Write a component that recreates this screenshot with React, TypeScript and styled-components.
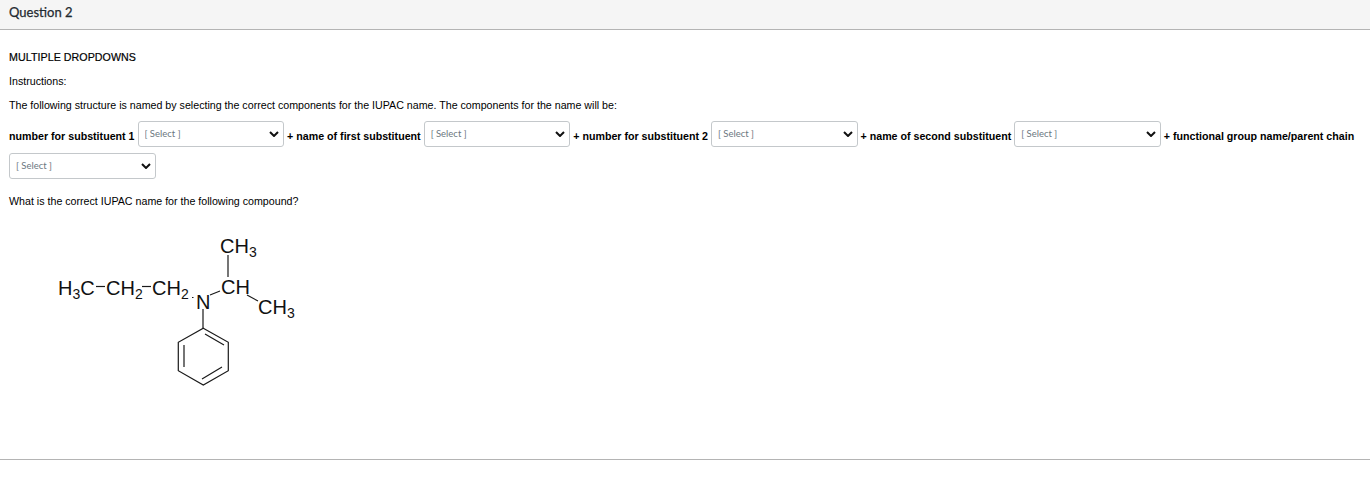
import React from 'react';
import styled, { createGlobalStyle } from 'styled-components';

const GlobalStyle = createGlobalStyle`
  html, body {
    margin: 0;
    padding: 0;
    background: #fff;
  }
`;

const Page = styled.div`
  width: 1370px;
  height: 479px;
  overflow: hidden;
  font-family: "Liberation Sans", Arial, sans-serif;
  font-size: 10.67px;
  color: #000;
`;

const Header = styled.header`
  height: 30px;
  box-sizing: border-box;
  padding: 3px 9px 0;
  background: #f5f5f5;
  border-bottom: 1px solid #b4b4b4;
  font-family: Lato, sans-serif;
  font-size: 13px;
  line-height: 18px;
  color: #1f2a30;
  -webkit-text-stroke: 0.25px #1f2a30;
`;

const Body = styled.section`
  height: 430px;
  box-sizing: border-box;
  padding: 21px 9px 0;
  border-bottom: 1px solid #b4b4b4;
`;

const Paragraph = styled.p`
  margin: 0 0 11px;
  line-height: 13px;
`;

const Title = styled(Paragraph)`
  letter-spacing: 0.06px;
  -webkit-text-stroke: 0.2px #000;
`;

const Prompt = styled.div`
  font-weight: 700;
  line-height: 32px;
  margin-top: -3px;
`;

const Field = styled.span<{ $flush?: boolean }>`
  position: relative;
  display: inline-block;
  overflow: hidden;
  width: 146.6px;
  height: 26px;
  margin: 0 3px 0 ${(props) => (props.$flush ? '0' : '3px')};
  vertical-align: -7px;
`;

const Select = styled.select`
  display: block;
  width: 100%;
  height: 100%;
  box-sizing: border-box;
  padding: 0 20px 2px 6px;
  appearance: none;
  background: #fff;
  border: 1px solid #c4c8cb;
  border-radius: 3px;
  font-family: Lato, sans-serif;
  font-size: 9.5px;
  color: #6b7780;
`;

const Chevron = styled.svg`
  position: absolute;
  top: 10px;
  right: 5px;
  pointer-events: none;
`;

const Question = styled(Paragraph)`
  margin-top: 11px;
`;

const Structure = styled.svg`
  display: block;
  margin: 16px 0 0 31px;
  font-family: "Liberation Sans", Arial, sans-serif;
`;

const Bond = styled.path`
  fill: none;
  stroke: #1a1a1a;
  stroke-width: 1.2;
`;

const Label = styled.text`
  font-size: 20px;
  fill: #111;
`;

const Sub = styled.tspan`
  font-size: 14px;
`;

const prompts = [
  'number for substituent 1',
  '+ name of first substituent',
  '+ number for substituent 2',
  '+ name of second substituent',
  '+ functional group name/parent chain',
];

const Dropdown: React.FC<{ flush?: boolean }> = ({ flush }) => (
  <Field $flush={flush}>
    <Select defaultValue="">
      <option value="">[ Select ]</option>
    </Select>
    <Chevron width="10" height="6" viewBox="0 0 10 6">
      <path d="M1 1L5 5L9 1" fill="none" stroke="#111" strokeWidth="2" />
    </Chevron>
  </Field>
);

// coordinates match the page, the svg box starts at (40, 225)
const Molecule: React.FC = () => (
  <Structure width="280" height="170" viewBox="40 225 280 170">
    <Label x="220" y="254">CH<Sub dy="4">3</Sub></Label>
    <Bond d="M228 256V278" />
    <Label x="58" y="296">H<Sub dy="4">3</Sub><tspan dy="-4">C</tspan></Label>
    <Bond d="M96 287.5H105" />
    <Label x="106" y="296">CH<Sub dy="4">2</Sub></Label>
    <Bond d="M142 287.5H151" />
    <Label x="152" y="296">CH<Sub dy="4">2</Sub></Label>
    <Bond d="M192 298.5H193.5" />
    <Label x="196" y="310">N</Label>
    <Label x="221" y="295">CH</Label>
    <Label x="258" y="315">CH<Sub dy="4">3</Sub></Label>
    <Bond d="M210 296L220 292M247 296L258 302M203 310V329" />
    <Bond d="M203.3 329.3L228.3 343.3V371.7L203.3 386L178.3 371.7V343.3Z" />
    <Bond d="M184 346V368M205 335L224 346M202 380L222 368" />
  </Structure>
);

const App: React.FC = () => (
  <Page>
    <GlobalStyle />
    <Header>Question 2</Header>
    <Body>
      <Title>MULTIPLE DROPDOWNS</Title>
      <Paragraph>Instructions:</Paragraph>
      <Paragraph>The following structure is named by selecting the correct components for the IUPAC name. The components for the name will be:</Paragraph>
      <Prompt>
        {prompts.map((text, index) => (
          <React.Fragment key={text}>
            {text}
            <Dropdown flush={index === prompts.length - 1} />
          </React.Fragment>
        ))}
      </Prompt>
      <Question>What is the correct IUPAC name for the following compound?</Question>
      <Molecule />
    </Body>
  </Page>
);

export default App;
